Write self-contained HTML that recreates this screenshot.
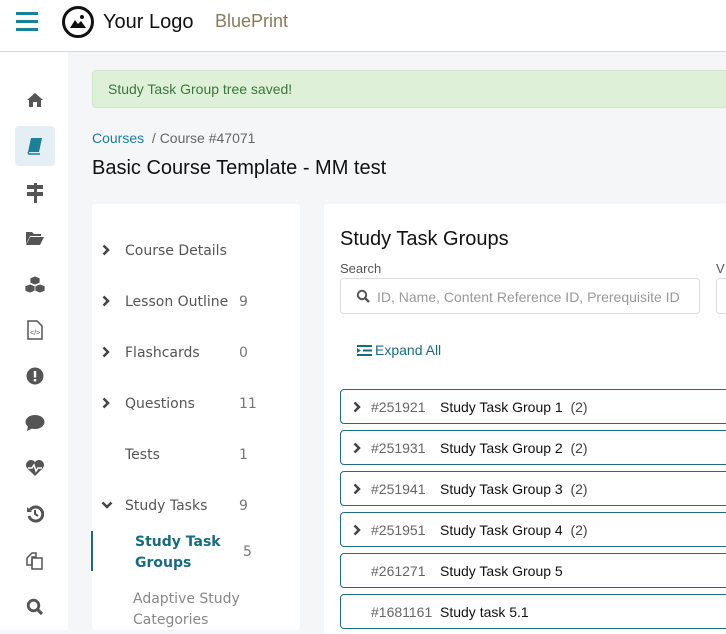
<!DOCTYPE html>
<html><head><style>
*{box-sizing:border-box;margin:0;padding:0}
body{width:726px;height:630px;overflow:hidden;background:#f5f6f8;font-family:"Liberation Sans",sans-serif;position:relative}
.hdr{position:absolute;left:0;top:0;width:726px;height:52px;background:#fff;border-bottom:1px solid #d8d8d8}
.side{position:absolute;left:0;top:52px;width:68px;height:578px;background:#fff}
.abs{position:absolute}
.menu{position:absolute;left:92px;top:204px;width:208px;height:426px;background:#fff;border-radius:4px}
.mi{position:absolute;left:33px;font-family:"DejaVu Sans",sans-serif;font-size:14px;color:#555}
.cnt{position:absolute;left:147px;font-family:"DejaVu Sans",sans-serif;font-size:14px;color:#777}
.chev{position:absolute;left:10px}
.card{position:absolute;left:324px;top:204px;width:410px;height:430px;background:#fff;border-radius:4px}
.row{position:absolute;left:16px;width:400px;height:35px;border:1.5px solid #1e6d85;border-radius:4px;font-size:14px}
.row .id{position:absolute;left:30px;top:9px;color:#666}
.row .nm{position:absolute;left:99px;top:9px;color:#111}
.row svg{position:absolute;left:12px;top:11px}
</style></head><body>
<div class="hdr">
 <div class="abs" style="left:16px;top:12px;width:22px;height:3px;background:#1a7f99;box-shadow:0 8px 0 #1a7f99,0 16px 0 #1a7f99"></div>
 <svg class="abs" style="left:61px;top:5px" width="34" height="34" viewBox="0 0 34 34"><circle cx="17" cy="17" r="14.5" fill="none" stroke="#111" stroke-width="3"/><path d="M9 23 L14 15 L17 19 L20 16 L25 23 Z" fill="#111"/><circle cx="21" cy="12" r="2" fill="#111"/></svg>
 <div class="abs" style="left:103px;top:11px;font-size:20px;color:#111">Your Logo</div>
 <div class="abs" style="left:215px;top:11px;font-size:18px;color:#8b7b5e">BluePrint</div>
</div>
<div class="side">
 <div class="abs" style="left:15px;top:74px;width:40px;height:40px;background:#e3eff4;border-radius:4px"></div>
</div>
<svg class="abs" style="left:26px;top:92px" width="18" height="16" viewBox="0 0 18 16"><path d="M9 1 L1 8 H3 V15 H7 V10 H11 V15 H15 V8 H17 Z" fill="#555"/></svg>
<svg class="abs" style="left:27px;top:137px" width="16" height="18" viewBox="0 0 16 18"><path d="M4 1 H15 L12 15 H1 Z" fill="#1a7f99"/><path d="M1 15 L2 17 H13" stroke="#1a7f99" stroke-width="1.5" fill="none"/></svg>
<svg class="abs" style="left:26px;top:183px" width="18" height="20" viewBox="0 0 18 20"><rect x="1" y="2" width="16" height="4" fill="#555"/><rect x="1" y="9" width="16" height="4" fill="#555"/><rect x="8" y="0" width="3" height="20" fill="#555"/></svg>
<svg class="abs" style="left:25px;top:230px" width="20" height="16" viewBox="0 0 20 16"><path d="M1 2 H7 L9 4 H16 V6 H5 L1 14 Z M5 7 H19 L15 15 H1 Z" fill="#555"/></svg>
<svg class="abs" style="left:24px;top:275px" width="22" height="20" viewBox="0 0 22 20"><path d="M11 1 L16 3 V8 L11 10 L6 8 V3 Z M6 9 L11 11 V16 L6 18 L1 16 V11 Z M16 9 L21 11 V16 L16 18 L11 16 V11 Z" fill="#555" stroke="#fff" stroke-width="0.8"/></svg>
<svg class="abs" style="left:27px;top:320px" width="16" height="20" viewBox="0 0 16 20"><path d="M1 1 H10 L15 6 V19 H1 Z" fill="none" stroke="#555" stroke-width="1.5"/><text x="3" y="15" font-size="7" fill="#555" font-family="Liberation Sans">&lt;/&gt;</text></svg>
<svg class="abs" style="left:26px;top:367px" width="18" height="18"><circle cx="9" cy="9" r="8.5" fill="#555"/><rect x="7.8" y="4" width="2.4" height="6.5" fill="#fff"/><rect x="7.8" y="12" width="2.4" height="2.4" fill="#fff"/></svg>
<svg class="abs" style="left:25px;top:414px" width="20" height="18"><ellipse cx="10" cy="8" rx="9.5" ry="7" fill="#555"/><path d="M3 12 L2 17 L8 14 Z" fill="#555"/></svg>
<svg class="abs" style="left:25px;top:459px" width="20" height="18" viewBox="0 0 20 18"><path d="M10 17 L2 9 A5 5 0 0 1 10 3 A5 5 0 0 1 18 9 Z" fill="#555"/><path d="M3 9 H7 L9 6 L11 12 L13 9 H17" stroke="#fff" stroke-width="1.5" fill="none"/></svg>
<svg class="abs" style="left:26px;top:505px" width="18" height="18"><path d="M4 5 A7 7 0 1 1 3 11" stroke="#555" stroke-width="3" fill="none"/><path d="M1 2 L6 7 L1 7 Z" fill="#555"/><path d="M9 5 V9 L12 11" stroke="#555" stroke-width="2" fill="none"/></svg>
<svg class="abs" style="left:25px;top:551px" width="20" height="20"><path d="M2 7 L7 2 H11 V6 H7 V14 H2 Z" fill="none" stroke="#555" stroke-width="1.5"/><path d="M7 7 H17 V18 H7 Z" fill="none" stroke="#555" stroke-width="1.5"/></svg>
<svg class="abs" style="left:26px;top:598px" width="18" height="18"><circle cx="7.5" cy="7.5" r="5.3" fill="none" stroke="#555" stroke-width="2.8"/><path d="M11.5 11.5 L16 16" stroke="#555" stroke-width="3.2"/></svg>

<div class="abs" style="left:92px;top:70px;width:640px;height:38px;background:#dff0d8;border:1px solid #cfe7c5;border-radius:4px;color:#3c763d;font-size:14px;padding:10px 0 0 15px">Study Task Group tree saved!</div>
<div class="abs" style="left:92px;top:130px;font-size:14px;color:#1a7f99">Courses <span style="color:#666">&nbsp;/ Course #47071</span></div>
<div class="abs" style="left:92px;top:157px;font-size:20px;color:#111">Basic Course Template - MM test</div>

<div class="menu">
 <svg class="chev" style="top:40px" width="8" height="12"><path d="M1.5 1.5 L6 6 L1.5 10.5" stroke="#444" stroke-width="2.5" fill="none"/></svg>
 <div class="mi" style="top:39px">Course Details</div>
 <svg class="chev" style="top:91px" width="8" height="12"><path d="M1.5 1.5 L6 6 L1.5 10.5" stroke="#444" stroke-width="2.5" fill="none"/></svg>
 <div class="mi" style="top:90px">Lesson Outline</div><div class="cnt" style="top:90px">9</div>
 <svg class="chev" style="top:142px" width="8" height="12"><path d="M1.5 1.5 L6 6 L1.5 10.5" stroke="#444" stroke-width="2.5" fill="none"/></svg>
 <div class="mi" style="top:141px">Flashcards</div><div class="cnt" style="top:141px">0</div>
 <svg class="chev" style="top:193px" width="8" height="12"><path d="M1.5 1.5 L6 6 L1.5 10.5" stroke="#444" stroke-width="2.5" fill="none"/></svg>
 <div class="mi" style="top:192px">Questions</div><div class="cnt" style="top:192px">11</div>
 <div class="mi" style="top:243px">Tests</div><div class="cnt" style="top:243px">1</div>
 <svg class="chev" style="top:297px;left:9px" width="12" height="8"><path d="M1.5 1.5 L6 6 L10.5 1.5" stroke="#444" stroke-width="2.5" fill="none"/></svg>
 <div class="mi" style="top:294px">Study Tasks</div><div class="cnt" style="top:294px">9</div>
 <div class="abs" style="left:-1px;top:327px;width:2px;height:40px;background:#1a6b80"></div>
 <div class="mi" style="left:43px;top:328px;color:#1a6b80;font-weight:bold;line-height:21px">Study Task<br>Groups</div>
 <div class="cnt" style="left:151px;top:340px">5</div>
 <div class="mi" style="left:41px;top:385px;color:#888;line-height:21px">Adaptive Study<br>Categories</div>
</div>

<div class="card">
 <div class="abs" style="left:16px;top:24px;font-size:20px;color:#111">Study Task Groups</div>
 <div class="abs" style="left:16px;top:57px;font-size:13px;color:#555">Search</div>
 <div class="abs" style="left:392px;top:57px;font-size:13px;color:#555">V</div>
 <div class="abs" style="left:16px;top:74px;width:360px;height:36px;border:1px solid #ddd;border-radius:4px"></div>
 <div class="abs" style="left:392px;top:74px;width:30px;height:36px;border:1px solid #ddd;border-radius:4px"></div>
 <svg class="abs" style="left:32px;top:85px" width="14" height="14"><circle cx="6" cy="6" r="4.2" fill="none" stroke="#555" stroke-width="2"/><path d="M9 9 L13 13" stroke="#555" stroke-width="2.4"/></svg>
 <div class="abs" style="left:53px;top:85px;font-size:14px;color:#999">ID, Name, Content Reference ID, Prerequisite ID</div>
 <svg class="abs" style="left:33px;top:141px" width="15" height="11"><rect x="0" y="0" width="15" height="2" fill="#1a6b80"/><rect x="6" y="4.5" width="9" height="2" fill="#1a6b80"/><rect x="0" y="9" width="15" height="2" fill="#1a6b80"/><path d="M0 3 L4 5.5 L0 8 Z" fill="#1a6b80"/></svg>
 <div class="abs" style="left:51px;top:138px;font-size:14px;color:#1a6b80">Expand All</div>
 <div class="row" style="top:185px"><svg width="8" height="12"><path d="M1.5 1.5 L6 6 L1.5 10.5" stroke="#444" stroke-width="2.5" fill="none"/></svg><span class="id">#251921</span><span class="nm">Study Task Group 1 &nbsp;<span style="color:#444">(2)</span></span></div>
 <div class="row" style="top:226px"><svg width="8" height="12"><path d="M1.5 1.5 L6 6 L1.5 10.5" stroke="#444" stroke-width="2.5" fill="none"/></svg><span class="id">#251931</span><span class="nm">Study Task Group 2 &nbsp;<span style="color:#444">(2)</span></span></div>
 <div class="row" style="top:267px"><svg width="8" height="12"><path d="M1.5 1.5 L6 6 L1.5 10.5" stroke="#444" stroke-width="2.5" fill="none"/></svg><span class="id">#251941</span><span class="nm">Study Task Group 3 &nbsp;<span style="color:#444">(2)</span></span></div>
 <div class="row" style="top:308px"><svg width="8" height="12"><path d="M1.5 1.5 L6 6 L1.5 10.5" stroke="#444" stroke-width="2.5" fill="none"/></svg><span class="id">#251951</span><span class="nm">Study Task Group 4 &nbsp;<span style="color:#444">(2)</span></span></div>
 <div class="row" style="top:349px"><span class="id">#261271</span><span class="nm">Study Task Group 5</span></div>
 <div class="row" style="top:390px"><span class="id">#1681161</span><span class="nm">Study task 5.1</span></div>
</div>
</body></html>
